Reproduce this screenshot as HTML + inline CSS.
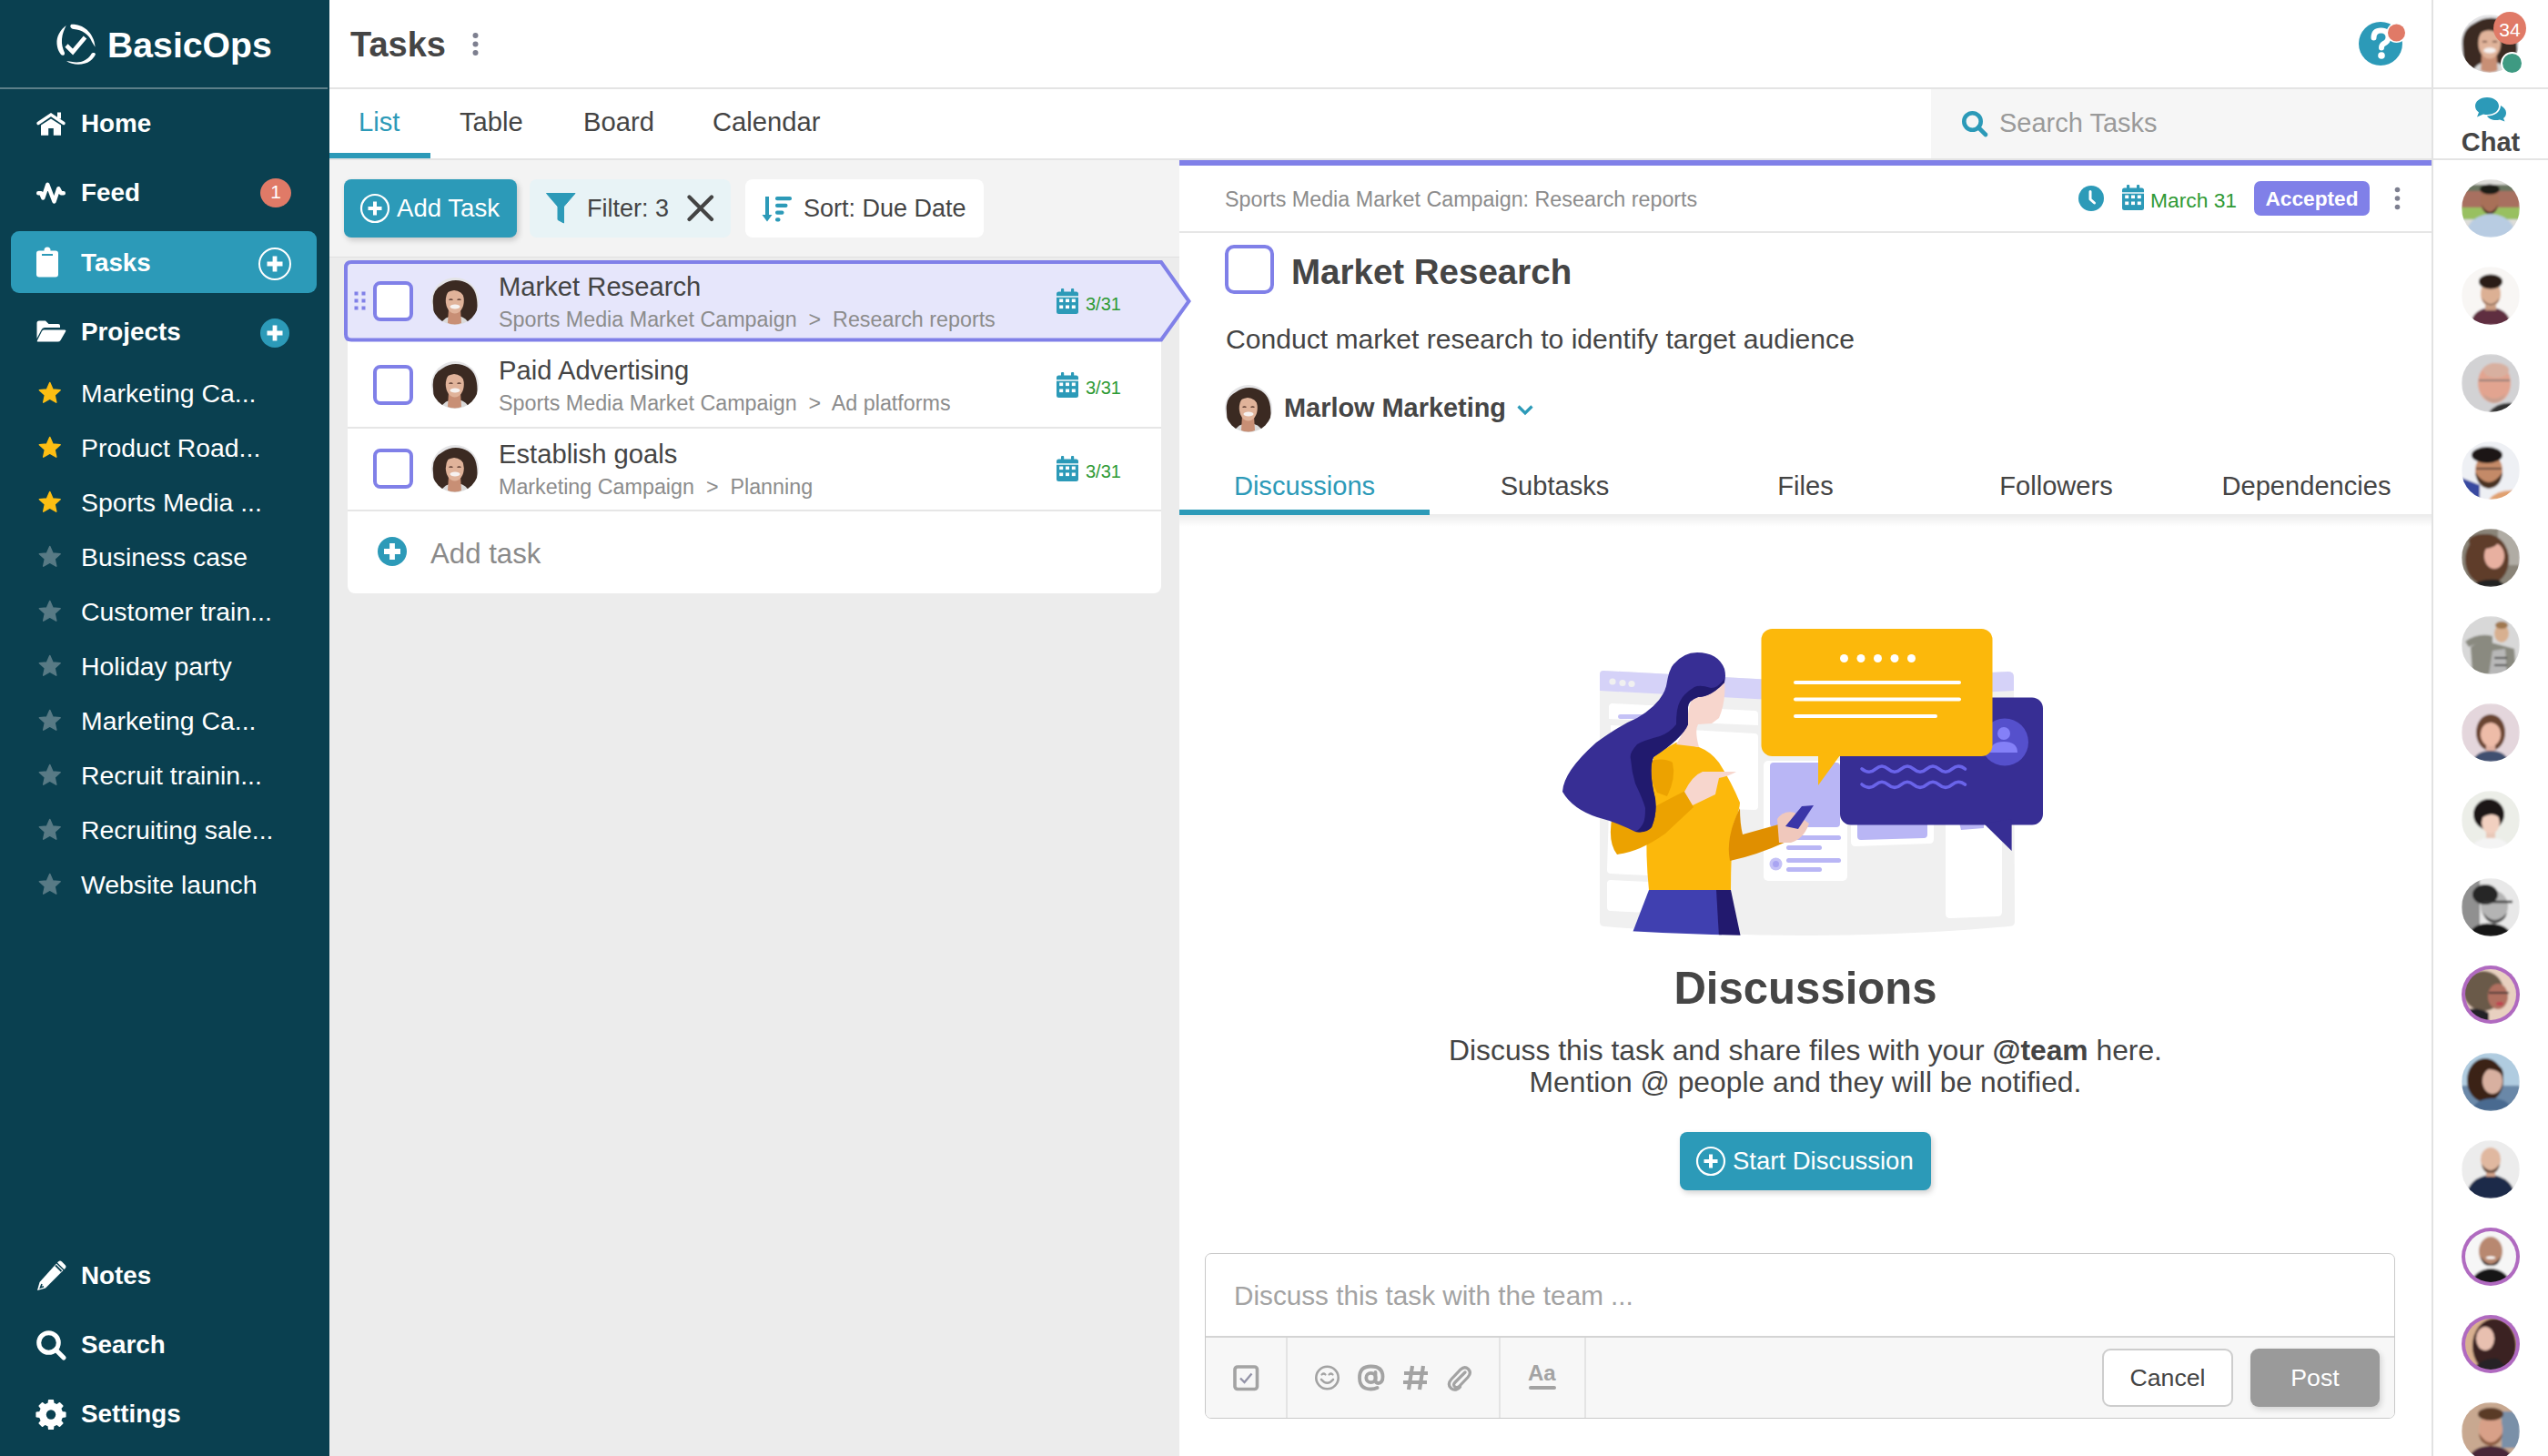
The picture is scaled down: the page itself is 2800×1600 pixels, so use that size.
<!DOCTYPE html>
<html><head><meta charset="utf-8">
<style>
*{box-sizing:border-box;margin:0;padding:0}
html,body{width:2800px;height:1600px;overflow:hidden;background:#fff;font-family:"Liberation Sans",sans-serif;color:#444}
.a{position:absolute}
.t{position:absolute;white-space:nowrap;line-height:1}
svg{position:absolute;overflow:visible}
#side{left:0;top:0;width:362px;height:1600px;background:#0a4050}
.nav{color:#fff;font-weight:700;font-size:27.8px}
.proj{color:#fff;font-size:28.4px}
</style></head><body>
<!-- LEFT SIDEBAR -->
<div id="side" class="a">
  <!-- logo -->
  <svg style="left:61px;top:24px" width="45" height="46" viewBox="0 0 45 46">
    <path d="M11.7,4 C5,9 1,16 1.5,24 C2,30 4,33 6,36 C7.5,37.5 10.5,37 10,34 C8,29 6.5,25 7,19 C7.5,13 9.5,8.5 11.7,4Z" fill="#fff"/>
    <path d="M17,3 C15.5,4.5 16.5,7.5 20,8 C29,8.5 37,14 40,22 L43.6,27.7 C43,17 35.5,5 22,3 C20,2.7 18,2.5 17,3Z" fill="#fff"/>
    <path d="M44,35.5 C43,33.5 40,33.5 39,36 C34,43 27,46 17,43.8 L12,43 C19,48 31,48 38,43 C41,40.5 43,38 44,35.5Z" fill="#fff"/>
    <path d="M12,26 L19,33 L32.5,17" stroke="#fff" stroke-width="4.6" fill="none"/>
  </svg>
  <div class="t" style="left:118px;top:29.6px;font-size:39.2px;font-weight:700;color:#fff;letter-spacing:0px">BasicOps</div>
  <div class="a" style="left:0;top:96px;width:360px;height:2px;background:#5c7f89"></div>
  <!-- nav -->
  <svg style="left:40px;top:122px" width="32" height="27" viewBox="0 0 32 27">
    <path d="M2,13.5 L16,4 L30,13.5" stroke="#fff" stroke-width="3.4" fill="none" stroke-linecap="round"/>
    <rect x="23" y="1.5" width="4" height="7" fill="#fff"/>
    <path d="M5,15.5 L16,8.5 L27,15.5 V26.7 H18.8 V19 H13.2 V26.7 H5 Z" fill="#fff"/>
  </svg>
  <div class="t nav" style="left:89px;top:122.4px">Home</div>
  <svg style="left:40px;top:199px" width="32" height="27" viewBox="0 0 32 27">
    <path d="M2.2,13.2 H5 L7.3,18.5 L12.3,3.8 L19.5,22.5 L24.3,8.2 L27,13.2 H29.8" stroke="#fff" stroke-width="4.4" fill="none" stroke-linejoin="round" stroke-linecap="round"/>
  </svg>
  <div class="t nav" style="left:89px;top:198.4px">Feed</div>
  <div class="a" style="left:12px;top:254px;width:336px;height:68px;border-radius:9px;background:#2c9ab8"></div>
  <svg style="left:40px;top:271px" width="25" height="34" viewBox="0 0 25 34">
    <rect x="0" y="4.5" width="24" height="29" rx="3" fill="#fff"/>
    <circle cx="12" cy="4" r="3.5" fill="#fff"/>
    <rect x="6" y="8" width="12" height="2" fill="#2c9ab8"/>
  </svg>
  <div class="t nav" style="left:89px;top:274.6px">Tasks</div>
  <svg style="left:40px;top:352px" width="33" height="24" viewBox="0 0 33 24">
    <path d="M0.5,3 Q0.5,0.5 3,0.5 H10 L13.5,4 H24 Q26,4 26,6 V8 H9 Q6.5,8 5.5,10.5 L0.5,20 Z" fill="#fff"/>
    <path d="M8,10.5 H31 Q33,10.5 32,12.5 L26.5,22 Q25.5,23.5 23.5,23.5 H1.5 Q0.2,23.5 1,22 L6,12 Q6.8,10.5 8,10.5Z" fill="#fff"/>
  </svg>
  <div class="t nav" style="left:89px;top:350.6px">Projects</div>
  <!-- badge / plus -->
  <div class="a" style="left:286px;top:196px;width:34px;height:32px;border-radius:50%;background:#e07a67"></div>
  <div class="t" style="left:286px;top:200px;width:34px;text-align:center;font-size:21px;color:#fff">1</div>
  <svg style="left:284px;top:272px" width="36" height="36" viewBox="0 0 36 36">
    <circle cx="18" cy="18" r="17" stroke="#fff" stroke-width="2" fill="none"/>
    <path d="M18,9.5 V26.5 M9.5,18 H26.5" stroke="#fff" stroke-width="4.8"/>
  </svg>
  <svg style="left:286px;top:350px" width="32" height="32" viewBox="0 0 32 32">
    <circle cx="16" cy="16" r="16" fill="#2c9ab8"/>
    <path d="M16,7.5 V24.5 M7.5,16 H24.5" stroke="#fff" stroke-width="4.8"/>
  </svg>
  <!-- projects -->
  <svg style="left:43px;top:420px" width="24" height="23"><polygon fill="#fdbe13" stroke="#fdbe13" stroke-width="1.5" stroke-linejoin="round" points="11.75,0.50 15.04,7.97 23.16,8.79 17.08,14.23 18.80,22.21 11.75,18.10 4.70,22.21 6.42,14.23 0.34,8.79 8.46,7.97"/></svg>
  <svg style="left:43px;top:480px" width="24" height="23"><polygon fill="#fdbe13" stroke="#fdbe13" stroke-width="1.5" stroke-linejoin="round" points="11.75,0.50 15.04,7.97 23.16,8.79 17.08,14.23 18.80,22.21 11.75,18.10 4.70,22.21 6.42,14.23 0.34,8.79 8.46,7.97"/></svg>
  <svg style="left:43px;top:540px" width="24" height="23"><polygon fill="#fdbe13" stroke="#fdbe13" stroke-width="1.5" stroke-linejoin="round" points="11.75,0.50 15.04,7.97 23.16,8.79 17.08,14.23 18.80,22.21 11.75,18.10 4.70,22.21 6.42,14.23 0.34,8.79 8.46,7.97"/></svg>
  <svg style="left:43px;top:600px" width="24" height="23"><polygon fill="#587a85" stroke="#587a85" stroke-width="1.5" stroke-linejoin="round" points="11.75,0.50 15.04,7.97 23.16,8.79 17.08,14.23 18.80,22.21 11.75,18.10 4.70,22.21 6.42,14.23 0.34,8.79 8.46,7.97"/></svg>
  <svg style="left:43px;top:660px" width="24" height="23"><polygon fill="#587a85" stroke="#587a85" stroke-width="1.5" stroke-linejoin="round" points="11.75,0.50 15.04,7.97 23.16,8.79 17.08,14.23 18.80,22.21 11.75,18.10 4.70,22.21 6.42,14.23 0.34,8.79 8.46,7.97"/></svg>
  <svg style="left:43px;top:720px" width="24" height="23"><polygon fill="#587a85" stroke="#587a85" stroke-width="1.5" stroke-linejoin="round" points="11.75,0.50 15.04,7.97 23.16,8.79 17.08,14.23 18.80,22.21 11.75,18.10 4.70,22.21 6.42,14.23 0.34,8.79 8.46,7.97"/></svg>
  <svg style="left:43px;top:780px" width="24" height="23"><polygon fill="#587a85" stroke="#587a85" stroke-width="1.5" stroke-linejoin="round" points="11.75,0.50 15.04,7.97 23.16,8.79 17.08,14.23 18.80,22.21 11.75,18.10 4.70,22.21 6.42,14.23 0.34,8.79 8.46,7.97"/></svg>
  <svg style="left:43px;top:840px" width="24" height="23"><polygon fill="#587a85" stroke="#587a85" stroke-width="1.5" stroke-linejoin="round" points="11.75,0.50 15.04,7.97 23.16,8.79 17.08,14.23 18.80,22.21 11.75,18.10 4.70,22.21 6.42,14.23 0.34,8.79 8.46,7.97"/></svg>
  <svg style="left:43px;top:900px" width="24" height="23"><polygon fill="#587a85" stroke="#587a85" stroke-width="1.5" stroke-linejoin="round" points="11.75,0.50 15.04,7.97 23.16,8.79 17.08,14.23 18.80,22.21 11.75,18.10 4.70,22.21 6.42,14.23 0.34,8.79 8.46,7.97"/></svg>
  <svg style="left:43px;top:960px" width="24" height="23"><polygon fill="#587a85" stroke="#587a85" stroke-width="1.5" stroke-linejoin="round" points="11.75,0.50 15.04,7.97 23.16,8.79 17.08,14.23 18.80,22.21 11.75,18.10 4.70,22.21 6.42,14.23 0.34,8.79 8.46,7.97"/></svg>
  <div class="t proj" style="left:89px;top:418px">Marketing Ca...</div>
  <div class="t proj" style="left:89px;top:478px">Product Road...</div>
  <div class="t proj" style="left:89px;top:538px">Sports Media ...</div>
  <div class="t proj" style="left:89px;top:598px">Business case</div>
  <div class="t proj" style="left:89px;top:658px">Customer train...</div>
  <div class="t proj" style="left:89px;top:718px">Holiday party</div>
  <div class="t proj" style="left:89px;top:778px">Marketing Ca...</div>
  <div class="t proj" style="left:89px;top:838px">Recruit trainin...</div>
  <div class="t proj" style="left:89px;top:898px">Recruiting sale...</div>
  <div class="t proj" style="left:89px;top:958px">Website launch</div>
  <!-- bottom nav -->
  <svg style="left:40px;top:1385px" width="33" height="34" viewBox="0 0 33 34">
    <path d="M22,3.5 L29.5,11 L10,30.5 L1,33 L3.5,24 Z" fill="#fff"/>
    <path d="M24,1.5 Q26,-0.5 28,1.5 L31.5,5 Q33.5,7 31.5,9 L30.5,10 L23,2.5Z" fill="#fff"/>
    <path d="M6,26 L4.5,30 L8,28.8" stroke="#0a4050" stroke-width="1.6" fill="none"/>
    <path d="M21,5.5 L27.5,12" stroke="#0a4050" stroke-width="1.8"/>
  </svg>
  <div class="t nav" style="left:89px;top:1388.4px">Notes</div>
  <svg style="left:40px;top:1462px" width="33" height="33" viewBox="0 0 33 33">
    <circle cx="13.5" cy="13.5" r="10.8" stroke="#fff" stroke-width="5" fill="none"/>
    <path d="M21.5,21.5 L30,30" stroke="#fff" stroke-width="5.2" stroke-linecap="round"/>
  </svg>
  <div class="t nav" style="left:89px;top:1464.4px">Search</div>
  <svg style="left:40px;top:1538px" width="32" height="33" viewBox="0 0 32 32">
    <path d="M28.19,13.21 L31.83,13.69 L31.83,18.31 L28.19,18.79 L26.59,22.64 L28.83,25.56 L25.56,28.83 L22.64,26.59 L18.79,28.19 L18.31,31.83 L13.69,31.83 L13.21,28.19 L9.36,26.59 L6.44,28.83 L3.17,25.56 L5.41,22.64 L3.81,18.79 L0.17,18.31 L0.17,13.69 L3.81,13.21 L5.41,9.36 L3.17,6.44 L6.44,3.17 L9.36,5.41 L13.21,3.81 L13.69,0.17 L18.31,0.17 L18.79,3.81 L22.64,5.41 L25.56,3.17 L28.83,6.44 L26.59,9.36Z" fill="#fff" stroke="#fff" stroke-width="1.5" stroke-linejoin="round"/>
    <circle cx="16" cy="16" r="5.2" fill="#0a4050"/>
  </svg>
  <div class="t nav" style="left:89px;top:1540.4px">Settings</div>
</div>
<!-- HEADER -->
<div class="a" style="left:362px;top:0;width:2310px;height:96px;background:#fff"></div>
<div class="a" style="left:362px;top:96px;width:2438px;height:2px;background:#e4e4e4"></div>
<!-- TABS BAR -->
<div class="a" style="left:362px;top:98px;width:1760px;height:76px;background:#fff"></div>
<div class="a" style="left:2122px;top:98px;width:550px;height:76px;background:#f6f6f6"></div>
<div class="a" style="left:362px;top:174px;width:2310px;height:2px;background:#e4e4e4"></div>
<!-- TOOLBAR + LIST BG -->
<div class="a" style="left:362px;top:176px;width:934px;height:106px;background:#f3f3f3"></div>
<div class="a" style="left:362px;top:282px;width:934px;height:1318px;background:#ececec"></div>
<div class="a" style="left:362px;top:282px;width:934px;height:1px;background:#e0e0e0"></div>
<!-- DETAIL PANEL -->
<div class="a" style="left:1296px;top:176px;width:1376px;height:1424px;background:#fff"></div>
<div class="a" style="left:1296px;top:176px;width:1376px;height:6px;background:#8080e8"></div>
<!-- HEADER CONTENT -->
<div class="t" style="left:385px;top:29.8px;font-size:38px;font-weight:700;color:#454545">Tasks</div>
<svg style="left:518px;top:35px" width="9" height="28" viewBox="0 0 9 28">
  <circle cx="4.5" cy="4" r="3" fill="#7d7f8f"/><circle cx="4.5" cy="13.5" r="3" fill="#7d7f8f"/><circle cx="4.5" cy="23" r="3" fill="#7d7f8f"/>
</svg>
<!-- help icon -->
<svg style="left:2592px;top:24px" width="60" height="50" viewBox="0 0 60 50">
  <circle cx="24" cy="24" r="24" fill="#2c9ab8"/>
  <path d="M16.5,17.5 Q16.5,9.5 24.5,9.5 Q32.5,9.5 32.5,17 Q32.5,21.5 27.5,24 Q25,25.5 25,28.5" stroke="#fff" stroke-width="6" fill="none" stroke-linecap="round"/>
  <circle cx="25" cy="37" r="3.8" fill="#fff"/>
  <circle cx="41.5" cy="12" r="11" fill="#fff"/>
  <circle cx="41.5" cy="12" r="9.5" fill="#e07a67"/>
</svg>
<!-- TABS -->
<div class="t" style="left:394px;top:120.3px;font-size:29.2px;color:#2c9ab8">List</div>
<div class="t" style="left:505px;top:120.3px;font-size:29.2px;color:#444">Table</div>
<div class="t" style="left:641px;top:120.3px;font-size:29.2px;color:#444">Board</div>
<div class="t" style="left:783px;top:120.3px;font-size:29.2px;color:#444">Calendar</div>
<div class="a" style="left:362px;top:168px;width:111px;height:6px;background:#2c9ab8"></div>
<!-- search -->
<svg style="left:2155px;top:121px" width="30" height="30" viewBox="0 0 30 30">
  <circle cx="12.5" cy="12.5" r="9.2" stroke="#2c9ab8" stroke-width="4.6" fill="none"/>
  <path d="M19,19 L27,27" stroke="#2c9ab8" stroke-width="4.6" stroke-linecap="round"/>
</svg>
<div class="t" style="left:2197px;top:121.4px;font-size:29px;color:#9a9a9a">Search Tasks</div>
<!-- TOOLBAR -->
<div class="a" style="left:378px;top:197px;width:190px;height:64px;border-radius:8px;background:#2c9ab8;box-shadow:2px 3px 6px rgba(0,0,0,0.18)"></div>
<svg style="left:395px;top:212px" width="34" height="34" viewBox="0 0 34 34">
  <circle cx="17" cy="17" r="15" stroke="#fff" stroke-width="2.2" fill="none"/>
  <path d="M17,9.5 V24.5 M9.5,17 H24.5" stroke="#fff" stroke-width="4"/>
</svg>
<div class="t" style="left:436px;top:214.9px;font-size:27.6px;color:#fff">Add Task</div>
<div class="a" style="left:582px;top:197px;width:221px;height:64px;border-radius:8px;background:#e8f3f6"></div>
<svg style="left:600px;top:212px" width="33" height="34" viewBox="0 0 33 34">
  <path d="M0.5,0.5 H32 L19.5,15 V33 L13,29.5 V15 Z" fill="#2c9ab8" stroke="#2c9ab8" stroke-width="1" stroke-linejoin="round"/>
</svg>
<div class="t" style="left:645px;top:215.6px;font-size:27px;color:#444">Filter: 3</div>
<svg style="left:755px;top:214px" width="30" height="30" viewBox="0 0 30 30">
  <path d="M2.5,2.5 L27,27 M27,2.5 L2.5,27" stroke="#444" stroke-width="4.2" stroke-linecap="round"/>
</svg>
<div class="a" style="left:819px;top:197px;width:262px;height:64px;border-radius:8px;background:#fff"></div>
<svg style="left:837px;top:215px" width="34" height="30" viewBox="0 0 34 30">
  <path d="M6,1 V26" stroke="#2c9ab8" stroke-width="4"/>
  <path d="M0.5,21 L6,28.5 L11.5,21 Z" fill="#2c9ab8"/>
  <rect x="15" y="1" width="18" height="4.2" rx="2" fill="#2c9ab8"/>
  <rect x="15" y="8.8" width="13.5" height="4.2" rx="2" fill="#2c9ab8"/>
  <rect x="15" y="16.5" width="9.5" height="4.2" rx="2" fill="#2c9ab8"/>
  <rect x="15" y="24.3" width="5.5" height="4.2" rx="2" fill="#2c9ab8"/>
</svg>
<div class="t" style="left:883px;top:215.6px;font-size:27px;color:#444">Sort: Due Date</div>
<!-- SYMBOLS -->
<svg width="0" height="0" style="position:absolute">
  <defs>
    <clipPath id="cc"><circle cx="26" cy="26" r="26"/></clipPath>
    <filter id="wblur" x="-10%" y="-10%" width="120%" height="120%"><feGaussianBlur stdDeviation="0.7"/></filter>
    <symbol id="wav" viewBox="0 0 52 52">
      <g clip-path="url(#cc)"><g filter="url(#wblur)">
        <rect width="52" height="52" fill="#e4e4e6"/>
        <path d="M2,30 Q0,14 12,8 Q22,1 34,4 Q48,8 50,24 Q52,38 46,48 L40,52 L8,52 Q2,44 2,30Z" fill="#3b2a22"/>
        <path d="M10,52 Q14,42 26,42 Q38,42 42,52Z" fill="#dadada"/>
        <path d="M19,34 L32,34 L33,50 Q26,53 18,50Z" fill="#c88f75"/>
        <ellipse cx="25.8" cy="25.5" rx="10" ry="14" fill="#e0b39a"/>
        <path d="M14,19 Q18,8 29,9 Q38,11 38,24 Q33,14 25,14 Q18,15 14,19Z" fill="#3b2a22"/>
        <ellipse cx="26" cy="32" rx="5.5" ry="2.5" fill="#f6f2f0"/>
        <path d="M19.5,24.5 Q21.5,23.5 23.5,24.5 M28.5,24.5 Q30.5,23.5 32.5,24.5" stroke="#5a3a30" stroke-width="1.3" fill="none"/>
      </g></g>
    </symbol>
    <symbol id="cal" viewBox="0 0 24 28">
      <rect x="0" y="3.5" width="24" height="24.5" rx="2.5" fill="#2c9ab8"/>
      <rect x="5" y="0" width="3.2" height="7" rx="1" fill="#2c9ab8"/>
      <rect x="16" y="0" width="3.2" height="7" rx="1" fill="#2c9ab8"/>
      <rect x="0" y="8.3" width="24" height="1.4" fill="#fff"/>
      <g fill="#fff">
        <rect x="3.2" y="11.5" width="4" height="3.6"/><rect x="10" y="11.5" width="4" height="3.6"/><rect x="16.8" y="11.5" width="4" height="3.6"/>
        <rect x="3.2" y="18.5" width="4" height="3.6"/><rect x="10" y="18.5" width="4" height="3.6"/><rect x="16.8" y="18.5" width="4" height="3.6"/>
      </g>
    </symbol>
  </defs>
</svg>
<!-- TASK LIST -->
<div class="a" style="left:382px;top:288px;width:894px;height:364px;background:#fff;border-radius:8px"></div>
<div class="a" style="left:382px;top:469px;width:894px;height:2px;background:#e6e6e6"></div>
<div class="a" style="left:382px;top:560px;width:894px;height:2px;background:#e6e6e6"></div>
<svg style="left:0;top:0" width="1400" height="400">
  <path d="M386,288 H1276 L1306.5,331 L1276,373.5 H386 Q380,373.5 380,367.5 V294 Q380,288 386,288 Z" fill="#e6e6fb" stroke="#8080e8" stroke-width="4" stroke-linejoin="miter"/>
</svg>
<!-- drag handle -->
<svg style="left:389px;top:320px" width="14" height="22" viewBox="0 0 14 22">
  <g fill="#8080e8"><rect x="0.5" y="0.5" width="4" height="4"/><rect x="8.5" y="0.5" width="4" height="4"/><rect x="0.5" y="8.5" width="4" height="4"/><rect x="8.5" y="8.5" width="4" height="4"/><rect x="0.5" y="16.5" width="4" height="4"/><rect x="8.5" y="16.5" width="4" height="4"/></g>
</svg>
<!-- rows -->
<div class="a" style="left:410px;top:309px;width:44px;height:44px;border:4.5px solid #8080e8;border-radius:8px;background:#fff"></div>
<div class="a" style="left:410px;top:401px;width:44px;height:44px;border:4.5px solid #8080e8;border-radius:8px;background:#fff"></div>
<div class="a" style="left:410px;top:493px;width:44px;height:44px;border:4.5px solid #8080e8;border-radius:8px;background:#fff"></div>
<svg style="left:474px;top:305px" width="52" height="52"><use href="#wav"/></svg>
<svg style="left:474px;top:397px" width="52" height="52"><use href="#wav"/></svg>
<svg style="left:474px;top:489px" width="52" height="52"><use href="#wav"/></svg>
<div class="t" style="left:548px;top:301.3px;font-size:29.2px;color:#444">Market Research</div>
<div class="t" style="left:548px;top:339.8px;font-size:23.3px;color:#8c8c8c">Sports Media Market Campaign &nbsp;&gt;&nbsp; Research reports</div>
<div class="t" style="left:548px;top:393.3px;font-size:29.2px;color:#444">Paid Advertising</div>
<div class="t" style="left:548px;top:431.8px;font-size:23.3px;color:#8c8c8c">Sports Media Market Campaign &nbsp;&gt;&nbsp; Ad platforms</div>
<div class="t" style="left:548px;top:485.3px;font-size:29.2px;color:#444">Establish goals</div>
<div class="t" style="left:548px;top:523.8px;font-size:23.3px;color:#8c8c8c">Marketing Campaign &nbsp;&gt;&nbsp; Planning</div>
<svg style="left:1161px;top:317px" width="24" height="28"><use href="#cal"/></svg>
<svg style="left:1161px;top:409px" width="24" height="28"><use href="#cal"/></svg>
<svg style="left:1161px;top:501px" width="24" height="28"><use href="#cal"/></svg>
<div class="t" style="left:1193px;top:324.1px;font-size:20px;color:#2e9a34">3/31</div>
<div class="t" style="left:1193px;top:416.1px;font-size:20px;color:#2e9a34">3/31</div>
<div class="t" style="left:1193px;top:508.1px;font-size:20px;color:#2e9a34">3/31</div>
<svg style="left:415px;top:590px" width="32" height="32" viewBox="0 0 32 32">
  <circle cx="16" cy="16" r="16" fill="#2c9ab8"/>
  <path d="M16,7 V25 M7,16 H25" stroke="#fff" stroke-width="5.8"/>
</svg>
<div class="t" style="left:473px;top:592.8px;font-size:31.2px;color:#8a8a8a">Add task</div>
<!-- DETAIL CONTENT -->
<div class="t" style="left:1346px;top:207.9px;font-size:23.3px;color:#8c8c8c">Sports Media Market Campaign: Research reports</div>
<svg style="left:2284px;top:204px" width="28" height="28" viewBox="0 0 28 28">
  <circle cx="14" cy="14" r="14" fill="#2c9ab8"/>
  <path d="M13,6.5 V15 L17.5,19" stroke="#fff" stroke-width="3" fill="none" stroke-linecap="round" stroke-linejoin="round"/>
</svg>
<svg style="left:2332px;top:203px" width="24" height="28"><use href="#cal"/></svg>
<div class="t" style="left:2363px;top:208.7px;font-size:22.8px;color:#2e9a34">March 31</div>
<div class="a" style="left:2477px;top:199px;width:127px;height:38px;border-radius:7px;background:#8080e8"></div>
<div class="t" style="left:2477px;top:206.8px;width:127px;text-align:center;font-size:22.7px;font-weight:700;color:#fff">Accepted</div>
<svg style="left:2630px;top:204px" width="9" height="28" viewBox="0 0 9 28">
  <circle cx="4.5" cy="4.5" r="2.8" fill="#7d7f8f"/><circle cx="4.5" cy="14" r="2.8" fill="#7d7f8f"/><circle cx="4.5" cy="23.5" r="2.8" fill="#7d7f8f"/>
</svg>
<div class="a" style="left:1296px;top:254px;width:1376px;height:2px;background:#e6e6e6"></div>
<div class="a" style="left:1346px;top:269px;width:54px;height:54px;border:4.8px solid #8080e8;border-radius:10px;background:#fff"></div>
<div class="t" style="left:1419px;top:280.4px;font-size:38.5px;font-weight:700;color:#454545">Market Research</div>
<div class="t" style="left:1347px;top:358.2px;font-size:30.1px;color:#444">Conduct market research to identify target audience</div>
<svg style="left:1346px;top:423px" width="52" height="52"><use href="#wav"/></svg>
<div class="t" style="left:1411px;top:433.5px;font-size:28.9px;font-weight:700;color:#454545">Marlow Marketing</div>
<svg style="left:1666px;top:444px" width="20" height="13" viewBox="0 0 20 13">
  <path d="M2.5,2.5 L10,10 L17.5,2.5" stroke="#2c9ab8" stroke-width="3.2" fill="none"/>
</svg>
<!-- detail tabs -->
<div class="a" style="left:1296px;top:566px;width:1376px;height:13px;background:linear-gradient(rgba(0,0,0,0.075),rgba(0,0,0,0))"></div>
<div class="a" style="left:1296px;top:565px;width:1376px;height:1px;background:#ececec"></div>
<div class="t" style="left:1296px;top:520.2px;width:275px;text-align:center;font-size:29.1px;color:#2c9ab8">Discussions</div>
<div class="t" style="left:1571px;top:520.2px;width:275px;text-align:center;font-size:29.1px;color:#444">Subtasks</div>
<div class="t" style="left:1846px;top:520.2px;width:276px;text-align:center;font-size:29.1px;color:#444">Files</div>
<div class="t" style="left:2122px;top:520.2px;width:275px;text-align:center;font-size:29.1px;color:#444">Followers</div>
<div class="t" style="left:2397px;top:520.2px;width:275px;text-align:center;font-size:29.1px;color:#444">Dependencies</div>
<div class="a" style="left:1296px;top:560px;width:275px;height:6px;background:#2c9ab8"></div>
<!-- ILLUSTRATION -->
<svg style="left:1700px;top:680px" width="560" height="360" viewBox="1700 680 560 360">
  <defs><clipPath id="winclip"><path d="M1700,680 H2260 V1017 Q1985,1040 1700,1017 Z"/></clipPath></defs>
  <!-- window -->
  <path d="M1762,737 L1985,749 L2207,738 Q2213,738 2213,744 L2214,1013 Q2214,1018 2208,1018 Q1985,1038 1763,1018 Q1758,1018 1758,1013 L1758,741 Q1758,737 1762,737Z" fill="#f0f0f0"/>
  <path d="M1762,737 L1985,749 L2207,738 Q2213,738 2213,744 L2213,759 L1985,771 L1758,759 L1758,741 Q1758,737 1762,737Z" fill="#d5d2f8"/>
  <circle cx="1772" cy="749" r="3.6" fill="#f0f0f0"/><circle cx="1783" cy="750.5" r="3.6" fill="#f0f0f0"/><circle cx="1793" cy="751.5" r="3.6" fill="#f0f0f0"/>
  <!-- inner cards -->
  <path d="M1772,773 L1928,781 Q1932,781 1932,785 L1932,797 L1768,790 L1768,777 Q1768,773 1772,773Z" fill="#fff"/>
  <rect x="1778" y="785" width="30" height="5" rx="2.5" fill="#c5c2f6"/>
  <path d="M1770,797 L1928,806 Q1932,806 1932,810 L1932,886 Q1932,890 1928,890 L1770,885 Z" fill="#fff"/>
  <path d="M1768,890 L1812,893 L1812,962 L1770,960 Q1766,960 1766,956Z" fill="#fff"/>
  <path d="M1770,967 L1812,969 L1812,1003 L1770,1001 Q1766,1001 1766,997 L1766,971 Q1766,967 1770,967Z" fill="#fff"/>
  <rect x="1938" y="836" width="92" height="132" rx="5" fill="#fff"/>
  <rect x="1945" y="838" width="77" height="71" rx="4" fill="#b9b6f5"/>
  <rect x="1963" y="918" width="60" height="5" rx="2.5" fill="#b9b6f5"/>
  <rect x="1963" y="929" width="39" height="5" rx="2.5" fill="#b9b6f5"/>
  <rect x="1963" y="943" width="60" height="5" rx="2.5" fill="#b9b6f5"/>
  <rect x="1963" y="953" width="39" height="5" rx="2.5" fill="#b9b6f5"/>
  <circle cx="1951.5" cy="949.5" r="7" fill="#c5c2f6"/><circle cx="1951.5" cy="949.5" r="3.5" fill="#a9a4f2"/>
  <path d="M2034,900 H2125 V922 Q2125,927 2120,927 L2039,930 Q2034,930 2034,925Z" fill="#fff"/>
  <path d="M2041,905 H2118 V917 Q2118,921 2114,921 L2045,923 Q2041,923 2041,919Z" fill="#b9b6f5"/>
  <path d="M2138,900 H2200 V1002 Q2200,1007 2195,1007 L2143,1009 Q2138,1009 2138,1004Z" fill="#fff"/>
  <path d="M2153,904 H2180 V910 L2155,912Z" fill="#b9b6f5"/>
  <!-- dark bubble -->
  <rect x="2022" y="766.5" width="223" height="140" rx="12" fill="#372e94"/>
  <path d="M2180,905 L2210.6,935 L2210.6,900Z" fill="#372e94"/>
  <circle cx="2203" cy="815.5" r="26" fill="#5550cc"/>
  <circle cx="2202" cy="806" r="7" fill="#8480f8"/>
  <path d="M2187,827 Q2187,815 2202,815 Q2217,815 2217,827Z" fill="#8480f8"/>
  <path d="M2046,844.8 Q2050,848.2 2054,848.2 C2061,848.2 2061,842 2068,842 S2075,848.2 2082,848.2 S2089,842 2096,842 S2103,848.2 2110,848.2 S2117,842 2124,842 S2131,848.2 2138,848.2 S2145,842 2152,842 Q2156,842 2159.5,845" stroke="#6a64ea" stroke-width="3.6" fill="none" stroke-linecap="round"/>
  <path d="M2046,862 Q2050,865.4 2054,865.4 C2061,865.4 2061,859.2 2068,859.2 S2075,865.4 2082,865.4 S2089,859.2 2096,859.2 S2103,865.4 2110,865.4 S2117,859.2 2124,859.2 S2131,865.4 2138,865.4 S2145,859.2 2152,859.2 Q2156,859.2 2159.5,862.2" stroke="#6a64ea" stroke-width="3.6" fill="none" stroke-linecap="round"/>
  <!-- yellow bubble -->
  <rect x="1935.5" y="691" width="254" height="140" rx="12" fill="#fcb80b"/>
  <path d="M1998,825 V863 L2022,830Z" fill="#fcb80b"/>
  <g fill="#fff"><circle cx="2026.5" cy="723.5" r="4.5"/><circle cx="2045" cy="723.5" r="4.5"/><circle cx="2063.5" cy="723.5" r="4.5"/><circle cx="2082" cy="723.5" r="4.5"/><circle cx="2100.5" cy="723.5" r="4.5"/></g>
  <g stroke="#fff" stroke-width="4" stroke-linecap="round"><path d="M1973,750 H2153"/><path d="M1973,768.5 H2153"/><path d="M1973,787 H2127"/></g>
  <!-- woman -->
  <g clip-path="url(#winclip)">
  <path d="M1812,978 L1888,978 L1892,1030 L1792,1030Z" fill="#4040b0"/>
  <path d="M1886,978 L1902,978 L1913,1030 L1889,1030Z" fill="#22196e"/>
  </g>
  
  <path d="M1842,816 L1867,821 Q1880,826 1889,838 Q1903,860 1912,882 Q1912,890 1905,905 Q1902,940 1902,978 L1812,978 Q1808,940 1810,900 Q1812,860 1817,832 Q1830,822 1842,816Z" fill="#fcb80b"/>
  <path d="M1812,836 Q1830,832 1838,838 Q1842,855 1832,875 L1821,871 Q1812,855 1812,836Z" fill="#eca200"/>
  <path d="M1772,895 Q1766,925 1777,939 Q1802,936 1830,916 L1861,887 L1852,869 Q1836,877 1823,884 Q1812,890 1805,895 Z" fill="#eca200"/>
  <path d="M1912,888 Q1912,905 1915,917 L1958,905 L1963,925 Q1930,940 1901,946 Q1896,920 1912,888Z" fill="#e08f00"/>
  <path d="M1851,870 Q1860,852 1871,848 L1908,848 Q1900,853 1889,855 Q1886,868 1885,873 L1860,885Z" fill="#f7d6cd"/>
  <path d="M1953,900 Q1960,890 1972,893 L1988,905 Q1982,922 1968,926 L1955,926Z" fill="#f0c8bc"/>
  <path d="M1962,908 L1980,886 L1993,885 L1976,911Z" fill="#3a35a8"/>
  <path d="M1856,778 L1862,760 L1895,748 Q1897,770 1889,789 L1881,795 L1866,796 Q1862,803 1867,821 L1842,818 Q1854,800 1856,778Z" fill="#f7d6cd"/>
  <path d="M1865,717 Q1888,717 1895,735 Q1897,743 1895,750 Q1880,766 1866,766 Q1855,770 1855,777 L1855,796 Q1849,811 1817,832 Q1812,843 1817,869 Q1823,889 1815,909 Q1806,916 1797,914 Q1778,904 1755,898 Q1728,889 1717,870 Q1718,848 1754,816 Q1780,797 1799,789 Q1826,773 1831,754 Q1834,735 1839,730 Q1850,717 1865,717Z" fill="#372e94"/>
  <path d="M1895,746 Q1888,756 1880,756 Q1868,752 1862,755 Q1850,762 1846,771 Q1842,778 1842,796 Q1835,805 1824,809 Q1805,814 1799,818 Q1790,828 1792,834 Q1793,848 1797,861 Q1806,880 1808,888 Q1808,900 1806,904 Q1803,911 1797,914 Q1810,916 1815,909 Q1823,889 1817,869 Q1812,843 1817,832 Q1849,811 1855,796 L1855,777 Q1855,770 1866,766 Q1880,766 1895,750Z" fill="#211a6e"/>
</svg>

<!-- empty state -->
<div class="t" style="left:1584px;top:1062.4px;width:800px;text-align:center;font-size:49.1px;font-weight:700;color:#454545">Discussions</div>
<div class="t" style="left:1484px;top:1138.6px;width:1000px;text-align:center;font-size:31.8px;color:#444">Discuss this task and share files with your <b>@team</b> here.</div>
<div class="t" style="left:1484px;top:1173.9px;width:1000px;text-align:center;font-size:31.8px;color:#444">Mention @ people and they will be notified.</div>
<div class="a" style="left:1846px;top:1244px;width:276px;height:64px;border-radius:8px;background:#2c9ab8;box-shadow:2px 3px 6px rgba(0,0,0,0.18)"></div>
<svg style="left:1863px;top:1259px" width="34" height="34" viewBox="0 0 34 34">
  <circle cx="17" cy="17" r="15" stroke="#fff" stroke-width="2.2" fill="none"/>
  <path d="M17,9.5 V24.5 M9.5,17 H24.5" stroke="#fff" stroke-width="4"/>
</svg>
<div class="t" style="left:1904px;top:1261.7px;font-size:27.5px;color:#fff">Start Discussion</div>
<!-- comment box -->
<div class="a" style="left:1324px;top:1377px;width:1308px;height:182px;border:1px solid #c9c9c9;border-radius:7px;background:#fff;overflow:hidden">
  <div class="a" style="left:0;top:90px;width:1306px;height:91px;background:#f7f7f7;border-top:2px solid #d4d4d4"></div>
  <div class="a" style="left:88px;top:92px;width:2px;height:89px;background:#e4e4e4"></div>
  <div class="a" style="left:322px;top:92px;width:2px;height:89px;background:#e4e4e4"></div>
  <div class="a" style="left:416px;top:92px;width:2px;height:89px;background:#e4e4e4"></div>
</div>
<div class="t" style="left:1356px;top:1408.6px;font-size:29.7px;color:#a3a3a3">Discuss this task with the team ...</div>
<svg style="left:1355px;top:1500px" width="29" height="29" viewBox="0 0 29 29">
  <rect x="2" y="2" width="24.5" height="24.5" rx="3" stroke="#a3a3a3" stroke-width="3.6" fill="none"/>
  <path d="M8,14.5 L12.5,19 L20.5,9.5" stroke="#9494a8" stroke-width="2.4" fill="none"/>
</svg>
<svg style="left:1444px;top:1500px" width="30" height="30" viewBox="0 0 30 30">
  <circle cx="14.5" cy="14" r="12.2" stroke="#a3a3a3" stroke-width="2.6" fill="none"/>
  <path d="M8,16 Q14.5,23.5 21,16" stroke="#a3a3a3" stroke-width="2.6" fill="none" stroke-linecap="round"/>
  <path d="M8.5,10.5 Q10.5,8.5 12.5,10.5 M16.5,10.5 Q18.5,8.5 20.5,10.5" stroke="#a3a3a3" stroke-width="2.2" fill="none" stroke-linecap="round"/>
</svg>
<svg style="left:1492px;top:1499px" width="30" height="30" viewBox="0 0 30 30">
  <path d="M21.5,26 Q18.5,27.5 14.5,27.5 Q2,27.5 2,15 Q2,2.5 14.5,2.5 Q27.5,2.5 27.5,14 Q27.5,21 22.5,21 Q19.5,21 19.5,17.5 V9" stroke="#a3a3a3" stroke-width="3.8" fill="none" stroke-linecap="round"/>
  <circle cx="14.5" cy="15" r="5.2" stroke="#a3a3a3" stroke-width="3.8" fill="none"/>
</svg>
<svg style="left:1541px;top:1499px" width="30" height="30" viewBox="0 0 30 30">
  <path d="M11,2 L7,28 M23,2 L19,28 M2,10 H28 M1,20 H27" stroke="#a3a3a3" stroke-width="4.2" fill="none"/>
</svg>
<svg style="left:1590px;top:1500px" width="27" height="29" viewBox="0 0 27 29">
  <path d="M20,8 L9,19 Q6,22 9,24 Q11.5,26 14,23 L23,13.5 Q27.5,8.5 23.5,4.5 Q19.5,0.8 15,5 L5,15.5 Q0,21 4.5,25.5 Q9,29.5 14.5,24" stroke="#a3a3a3" stroke-width="3.2" fill="none" stroke-linecap="round"/>
</svg>
<div class="t" style="left:1679px;top:1497px;font-size:24px;font-weight:700;color:#a3a3a3">Aa</div>
<div class="a" style="left:1680px;top:1523px;width:30px;height:4px;border-radius:2px;background:#a3a3a3"></div>
<div class="a" style="left:2310px;top:1482px;width:144px;height:64px;border:2px solid #cdcdcd;border-radius:9px;background:#fff"></div>
<div class="t" style="left:2310px;top:1501.2px;width:144px;text-align:center;font-size:26.7px;color:#444">Cancel</div>
<div class="a" style="left:2473px;top:1482px;width:142px;height:64px;border-radius:9px;background:#9a9a9a;box-shadow:2px 3px 6px rgba(0,0,0,0.15)"></div>
<div class="t" style="left:2473px;top:1501.2px;width:142px;text-align:center;font-size:26.7px;color:#fff">Post</div>
<!-- RIGHT SIDEBAR -->
<div class="a" style="left:2674px;top:0;width:126px;height:1600px;background:#fff"></div>
<svg style="left:2704px;top:16px" width="64" height="64" viewBox="0 0 52 52"><use href="#wav"/></svg>
<div class="a" style="left:2740px;top:13px;width:36px;height:36px;border-radius:50%;background:#e07a67"></div>
<div class="t" style="left:2740px;top:22px;width:36px;text-align:center;font-size:21px;color:#fff">34</div>
<div class="a" style="left:2748px;top:57px;width:25px;height:25px;border-radius:50%;background:#3e9a82;border:2.5px solid #fff"></div>
<svg style="left:2719px;top:106px" width="36" height="28" viewBox="0 0 36 28">
  <path d="M14,1 C6,1 1,5.5 1,10.5 C1,13.5 2.5,15.5 5,17.5 L3,22.5 L10,19.5 C11.5,20 12.8,20 14,20 C22,20 27,15.5 27,10.5 C27,5.5 22,1 14,1Z" fill="#2c9ab8"/>
  <path d="M29,10 C33,12 35,15 35,18 C35,20.5 34,22.5 32,24 L33.5,27.5 L28,25.5 C26.5,26 25,26 24,26 C19,26 15.5,24 14,21.5 C22,21.5 29,17 29,10Z" fill="#2c9ab8"/>
</svg>
<div class="t" style="left:2674px;top:141.5px;width:126px;text-align:center;font-size:29px;font-weight:700;color:#454545">Chat</div>
<svg width="0" height="0" style="position:absolute"><defs><clipPath id="avc"><circle cx="32" cy="32" r="32"/></clipPath><clipPath id="avr"><circle cx="32" cy="32" r="28"/></clipPath><filter id="avb" x="-10%" y="-10%" width="120%" height="120%"><feGaussianBlur stdDeviation="0.9"/></filter></defs></svg>
<svg style="left:2705px;top:196.5px" width="64" height="64" viewBox="0 0 64 64"><g clip-path="url(#avc)"><g filter="url(#avb)"><rect width="64" height="64" fill="#dcdcd8"/><rect y="6" width="64" height="8" fill="#6a7460"/><rect y="13" width="64" height="18" fill="#a87060"/><rect y="31" width="64" height="13" fill="#98c060"/><path d="M4,64 Q6,40 32,38 Q58,40 60,64Z" fill="#b8cce2"/><ellipse cx="31" cy="24" rx="10.5" ry="14" fill="#a87058"/><ellipse cx="31" cy="11" rx="11" ry="5.5" fill="#1e1a18"/><path d="M22,28 Q31,44 40,28 Q38,38 31,38 Q24,38 22,28Z" fill="#3a2820"/></g></g></svg>
<svg style="left:2705px;top:292.5px" width="64" height="64" viewBox="0 0 64 64"><g clip-path="url(#avc)"><g filter="url(#avb)"><rect width="64" height="64" fill="#f8f6f4"/><path d="M10,64 Q12,46 32,45 Q52,46 54,64Z" fill="#5e2e40"/><rect x="26" y="38" width="12" height="10" fill="#c89a80"/><ellipse cx="32" cy="30" rx="11" ry="14" fill="#dcb094"/><ellipse cx="32" cy="16.5" rx="13" ry="8" fill="#2a1e18"/><path d="M22,34 Q32,48 42,34 Q40,42 32,43 Q24,42 22,34Z" fill="#8a6a58"/></g></g></svg>
<svg style="left:2705px;top:388.5px" width="64" height="64" viewBox="0 0 64 64"><g clip-path="url(#avc)"><g filter="url(#avb)"><rect width="64" height="64" fill="#d2d2d4"/><path d="M30,64 Q40,52 56,54 L60,64Z" fill="#303030"/><ellipse cx="36" cy="32" rx="18" ry="22" fill="#e2a490"/><ellipse cx="38" cy="18" rx="14" ry="8" fill="#d8b0a0"/><path d="M19,29 H53" stroke="#707070" stroke-width="1.5"/><path d="M24,44 Q36,54 48,44 Q46,52 36,54 Q26,52 24,44Z" fill="#c8a090"/></g></g></svg>
<svg style="left:2705px;top:484.5px" width="64" height="64" viewBox="0 0 64 64"><g clip-path="url(#avc)"><g filter="url(#avb)"><rect width="64" height="64" fill="#eef0f4"/><path d="M0,40 L20,48 L20,64 L0,64Z" fill="#3848a0"/><path d="M30,64 Q40,52 60,54 L62,64Z" fill="#e0a070"/><ellipse cx="30" cy="32" rx="15" ry="18" fill="#c48a68"/><ellipse cx="28" cy="15" rx="17" ry="9" fill="#1a1614"/><path d="M15,34 Q30,56 45,34 Q44,50 30,52 Q17,50 15,34Z" fill="#4a3024"/><path d="M16,30 H44" stroke="#3a3030" stroke-width="1.6"/></g></g></svg>
<svg style="left:2705px;top:580.5px" width="64" height="64" viewBox="0 0 64 64"><g clip-path="url(#avc)"><g filter="url(#avb)"><rect width="64" height="64" fill="#8a8478"/><rect x="40" y="0" width="24" height="40" fill="#b0aca4"/><ellipse cx="28" cy="34" rx="24" ry="28" fill="#5e3e2c"/><path d="M10,64 Q20,54 40,56 L50,64Z" fill="#202020"/><ellipse cx="36" cy="30" rx="11" ry="14" fill="#e8b0a0"/><ellipse cx="24" cy="14" rx="16" ry="8" fill="#5e3e2c"/></g></g></svg>
<svg style="left:2705px;top:676.5px" width="64" height="64" viewBox="0 0 64 64"><g clip-path="url(#avc)"><g filter="url(#avb)"><rect width="64" height="64" fill="#d8d8d8"/><path d="M12,64 L10,34 Q20,26 36,30 L58,36 L60,64Z" fill="#8a8a80"/><path d="M4,28 Q18,18 34,22 L34,30 Q18,28 8,34Z" fill="#8a8a80"/><path d="M30,64 L34,38 L48,36 L50,64Z" fill="#b8b8b8"/><path d="M36,46 H50 M36,54 H50" stroke="#404040" stroke-width="2"/><ellipse cx="44" cy="19" rx="8" ry="10" fill="#d8b090"/><ellipse cx="44" cy="10" rx="7" ry="4" fill="#a07850"/></g></g></svg>
<svg style="left:2705px;top:772.5px" width="64" height="64" viewBox="0 0 64 64"><g clip-path="url(#avc)"><g filter="url(#avb)"><rect width="64" height="64" fill="#e4d6dc"/><path d="M12,64 Q16,52 32,52 Q48,52 52,64Z" fill="#405070"/><ellipse cx="32" cy="32" rx="16" ry="20" fill="#6a4430"/><rect x="27" y="40" width="10" height="12" fill="#e0b0a0"/><ellipse cx="32" cy="34" rx="11" ry="13" fill="#eebca8"/><path d="M20,28 Q22,16 32,16 Q42,16 44,28 Q38,20 32,21 Q24,21 20,28Z" fill="#6a4430"/></g></g></svg>
<svg style="left:2705px;top:868.5px" width="64" height="64" viewBox="0 0 64 64"><g clip-path="url(#avc)"><g filter="url(#avb)"><rect width="64" height="64" fill="#eceee8"/><path d="M10,64 Q14,52 32,52 Q50,52 54,64Z" fill="#f4f4f4"/><ellipse cx="30" cy="26" rx="17" ry="17" fill="#1a1414"/><rect x="27" y="40" width="10" height="12" fill="#e8c8b8"/><ellipse cx="32" cy="35" rx="10" ry="12" fill="#f2d0c0"/><path d="M22,30 Q26,20 40,22 Q42,26 42,30 Q34,22 22,30Z" fill="#1a1414"/></g></g></svg>
<svg style="left:2705px;top:964.5px" width="64" height="64" viewBox="0 0 64 64"><g clip-path="url(#avc)"><g filter="url(#avb)"><rect width="64" height="64" fill="#e8e8e8"/><rect width="20" height="64" fill="#909090"/><path d="M6,64 Q14,48 32,50 Q50,50 56,64Z" fill="#181818"/><ellipse cx="36" cy="31" rx="15" ry="17" fill="#b4b4b4"/><ellipse cx="26" cy="18" rx="14" ry="11" fill="#282828"/><path d="M24,26 H56" stroke="#303030" stroke-width="2.5"/><path d="M24,38 Q36,54 50,38 Q48,48 36,50 Q26,48 24,38Z" fill="#505050"/></g></g></svg>
<svg style="left:2705px;top:1060.5px" width="64" height="64" viewBox="0 0 64 64"><circle cx="32" cy="32" r="32" fill="#b06ac0"/><g clip-path="url(#avr)"><g filter="url(#avb)"><rect width="64" height="64" fill="#e8d0c0"/><ellipse cx="24" cy="28" rx="22" ry="22" fill="#6a5a48"/><path d="M0,50 Q16,44 30,52 L30,64 L0,64Z" fill="#202028"/><ellipse cx="40" cy="34" rx="11" ry="14" fill="#b07060"/><path d="M30,30 H52" stroke="#303030" stroke-width="2"/><ellipse cx="42" cy="42" rx="4" ry="2" fill="#c04050"/></g></g></svg>
<svg style="left:2705px;top:1156.5px" width="64" height="64" viewBox="0 0 64 64"><g clip-path="url(#avc)"><g filter="url(#avb)"><rect width="64" height="64" fill="#b0cce0"/><rect y="36" width="64" height="28" fill="#6a88a8"/><ellipse cx="26" cy="30" rx="20" ry="24" fill="#3a2418"/><path d="M10,64 Q16,50 34,50 Q52,50 56,64Z" fill="#4a6a90"/><ellipse cx="34" cy="31" rx="11" ry="14" fill="#d8b0a0"/><path d="M18,24 Q22,10 36,12 Q46,14 46,26 Q40,18 30,18 Q22,18 18,24Z" fill="#3a2418"/></g></g></svg>
<svg style="left:2705px;top:1252.5px" width="64" height="64" viewBox="0 0 64 64"><g clip-path="url(#avc)"><g filter="url(#avb)"><rect width="64" height="64" fill="#ececec"/><path d="M4,64 Q8,40 32,38 Q56,40 60,64Z" fill="#1e2a48"/><rect x="27" y="30" width="10" height="10" fill="#d0a088"/><ellipse cx="32" cy="21" rx="11" ry="13" fill="#e0b8a0"/><path d="M22,26 Q32,40 42,26 Q41,36 32,36 Q23,36 22,26Z" fill="#6a5040"/></g></g></svg>
<svg style="left:2705px;top:1348.5px" width="64" height="64" viewBox="0 0 64 64"><circle cx="32" cy="32" r="32" fill="#b06ac0"/><g clip-path="url(#avr)"><g filter="url(#avb)"><rect width="64" height="64" fill="#f6f6f6"/><path d="M8,64 Q14,46 32,45 Q50,46 56,64Z" fill="#141414"/><ellipse cx="32" cy="26" rx="13" ry="16" fill="#b88870"/><path d="M21,32 Q32,48 43,32 Q42,42 32,42 Q22,42 21,32Z" fill="#3a3030"/><ellipse cx="32" cy="33" rx="5" ry="1.6" fill="#fff"/></g></g></svg>
<svg style="left:2705px;top:1444.5px" width="64" height="64" viewBox="0 0 64 64"><circle cx="32" cy="32" r="32" fill="#b06ac0"/><g clip-path="url(#avr)"><g filter="url(#avb)"><rect width="64" height="64" fill="#d8b090"/><ellipse cx="36" cy="34" rx="24" ry="30" fill="#3a2020"/><path d="M10,64 Q20,46 40,48 L56,64Z" fill="#282028"/><ellipse cx="26" cy="26" rx="10" ry="13" fill="#e8c0b0"/></g></g></svg>
<svg style="left:2705px;top:1540.5px" width="64" height="64" viewBox="0 0 64 64"><g clip-path="url(#avc)"><g filter="url(#avb)"><rect width="64" height="64" fill="#c8a890"/><rect x="44" y="10" width="20" height="40" fill="#7a90a8"/><path d="M6,64 Q12,48 32,48 Q52,48 58,64Z" fill="#4a2838"/><ellipse cx="32" cy="30" rx="13" ry="17" fill="#d8a088"/><ellipse cx="32" cy="13" rx="14" ry="7" fill="#5a3a28"/><path d="M19,34 Q32,54 45,34 Q44,46 32,48 Q20,46 19,34Z" fill="#8a5a40"/></g></g></svg>
<div class="a" style="left:2672px;top:0;width:2px;height:1600px;background:#e2e2e2"></div>
<div class="a" style="left:2674px;top:174px;width:126px;height:2px;background:#e4e4e4"></div>
<div class="a" style="left:2674px;top:96px;width:126px;height:2px;background:#e4e4e4"></div>
</body></html>
